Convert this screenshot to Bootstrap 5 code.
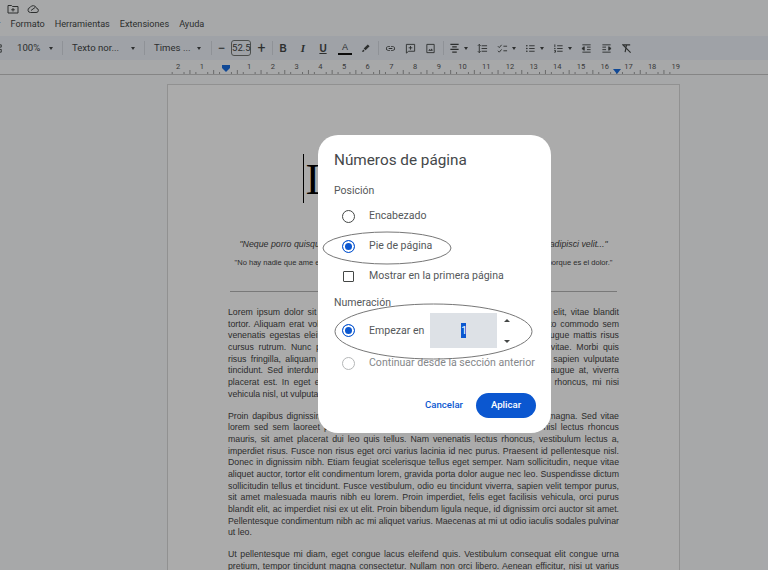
<!DOCTYPE html>
<html lang="es">
<head>
  <meta charset="UTF-8" />
  <meta name="viewport" content="width=device-width, initial-scale=1.0"/>
  <title>Números de página</title>
  <link href="https://cdn.jsdelivr.net/npm/bootstrap@5.3.0/dist/css/bootstrap.min.css" rel="stylesheet" />
  <style>
    html, body { height: 100%; overflow: hidden; }
    body { background: #f9fbfd; color: #444746; font-family: Roboto, "Liberation Sans", sans-serif; }

    .app-shell { height: 570px; overflow: hidden; }
    .top-icons { height: 17px; padding-left: 7px; gap: 8px; }
    .top-icons svg { width: 12px; height: 12px; }
    .menu-row { height: 15px; margin: 0 0 4px -31px; gap: 10px; font-size: 9.15px; color: #444746; }
    .tool-row { height: 24px; background: #edf2fa; margin-left: -12px; font-size: 9.6px; color: #444746; width: 800px; }
    .tool-cell { flex: none; display: flex; align-items: center; justify-content: center; height: 24px; }
    .tool-cell svg { width: 11px; height: 11px; }
    .w-paint { width: 20px; }
    .w-zoom { width: 54px; padding: 0 9px; justify-content: space-between; }
    .w-style { width: 81px; padding: 0 9px; justify-content: space-between; }
    .w-font { width: 66px; padding: 0 10px 0 9px; justify-content: space-between; }
    .w-step { width: 19px; font-size: 14px; }
    .w-plus { width: 21px; font-size: 14px; }
    .w-btn { width: 20px; }
    .w-21 { width: 21px; }
    .w-drop { width: 28px; gap: 4px; }
    .gap-l2 { margin-left: 2px; }
    .gap-l1 { margin-left: 1px; }
    .size-box { flex: none; width: 20px; height: 16px; border: 1px solid #747775; border-radius: 3px; text-align: center; line-height: 14px; font-size: 9.6px; }
    .tool-sep { flex: none; width: 1px; height: 14px; background: #d5dae2; }
    .tb-caret { width: 0; height: 0; border: 2.5px solid transparent; border-top: 3px solid #444746; border-bottom: 0; }
    .glyph-b { font: 700 10px "Liberation Sans", sans-serif; }
    .glyph-i { font: italic 700 11px "Liberation Serif", serif; }
    .glyph-u { font: 700 10px "Liberation Sans", sans-serif; text-decoration: underline; }
    .glyph-a { font: 400 9px "Liberation Sans", sans-serif; border-bottom: 2px solid #111; line-height: 11px; width: 14px; text-align: center; }

    .ruler-row { height: 15px; border-bottom: 1px solid #c7c7c7; }
    .ruler-row svg { display: block; }

    .doc-area { padding: 9px 0 0 167px; }
    .doc-page { width: 513px; height: 600px; background: #fff; border: 1px solid #d8d8d8; padding: 69px 60px 0 60px; color: #444; font-family: "Liberation Sans", sans-serif; }
    .doc-title { font: 400 44px/52px "Liberation Serif", serif; color: #000; text-align: center; white-space: nowrap; }
    .doc-title i { display: inline-block; width: 1px; height: 49px; background: #000; vertical-align: -9px; margin-right: 2px; }
    .doc-quote { font-style: italic; font-size: 8.8px; text-align: center; margin: 32px 0 0; line-height: 12px; white-space: nowrap; }
    .doc-quote2 { font-size: 7.55px; text-align: center; margin: 7px 0 0; line-height: 11px; white-space: nowrap; }
    .doc-rule { height: 1px; border: 0; background: #b5b5b5; margin: 23px 2px 15px; opacity: 1; }
    .doc-par { font-size: 8.75px; line-height: 11.65px; margin: 0 0 10.4px; }
    .doc-par span { display: block; text-align: justify; text-align-last: justify; white-space: nowrap; }
    .doc-par span.last { text-align-last: left; }

    .page-scrim { position: absolute; inset: 0; background: rgba(0, 0, 0, .33); }
    .page-dialog { position: absolute; left: 318px; top: 135px; width: 233px; height: 298px; background: #fff; border-radius: 20px; padding: 15px 16px 0; color: #55585a; }
    .page-dialog h1 { font-size: 15.3px; line-height: 20px; font-weight: 400; margin: 0 0 14px; color: #45484a; }
    .dlg-head { font-size: 10.5px; line-height: 14px; font-weight: 400; margin: 0 0 3px; color: #55585a; }
    .dlg-gap { margin-top: 5px; }
    .dlg-row { display: flex; align-items: center; height: 30px; margin: 0; font-size: 10.55px; }
    .num-row { height: 35px; }
    .dlg-mark { flex: none; width: 28px; margin: 0 7px 0 0; display: flex; justify-content: center; }
    .dlg-radio { appearance: none; width: 13px; height: 13px; border: 1.5px solid #444746; border-radius: 50%; margin: 0; background: #fff; }
    .dlg-radio:checked { border-color: #0b57d0; background: #0b57d0; box-shadow: inset 0 0 0 2px #fff; }
    .dlg-radio:disabled { border-color: #b5b7b8; }
    .dlg-check { appearance: none; width: 11px; height: 11px; border: 1.5px solid #444746; border-radius: 1px; margin: 0; background: #fff; }
    .dlg-off { color: #85878a; }
    .num-box { width: 67px; height: 35px; background: #dde1e6; margin-left: 6px; display: flex; align-items: center; justify-content: center; }
    .num-box span { background: #0b57d0; color: #fff; width: 5px; height: 15px; font-size: 10.4px; line-height: 15px; text-align: center; overflow: hidden; }
    .num-spin { width: 20px; height: 24px; display: flex; flex-direction: column; justify-content: space-between; align-items: center; }
    .spin-up { width: 0; height: 0; border: 3px solid transparent; border-bottom: 3px solid #444746; border-top: 0; }
    .spin-down { width: 0; height: 0; border: 3px solid transparent; border-top: 3px solid #444746; border-bottom: 0; }
    .dlg-foot { position: absolute; right: 15px; bottom: 15px; gap: 13px; }
    .btn-cancel { font-size: 9.6px; font-weight: 500; color: #0b57d0; padding: 0; border: 0; }
    .btn-apply { width: 60px; height: 25px; padding: 0; font-size: 9.6px; font-weight: 500; background: #0b57d0; color: #fff; border: 0; border-radius: 13px; }
    .note-ink { position: absolute; left: 0; top: 0; pointer-events: none; }
  </style>
</head>
<body>
  <svg width="0" height="0" class="d-block">
    <symbol id="i-list" viewBox="0 0 24 24"><path d="M9 6h12M9 12h12M9 18h12" stroke="#444746" stroke-width="2" fill="none"/><circle cx="4" cy="6" r="1.8" fill="#444746"/><circle cx="4" cy="12" r="1.8" fill="#444746"/><circle cx="4" cy="18" r="1.8" fill="#444746"/></symbol>
    <symbol id="i-numlist" viewBox="0 0 24 24"><path d="M9 6h12M9 12h12M9 18h12M4 3v6M2.5 12h3M2.5 16h3v4h-3" stroke="#444746" stroke-width="2" fill="none"/></symbol>
  </svg>

  <div class="app-shell">
    <div class="top-icons d-flex align-items-center">
      <svg viewBox="0 0 24 24"><path d="M2 5h7l2 2h11v13H2z M12 10v7M8.5 13.500h7" fill="none" stroke="#444746" stroke-width="2"/></svg>
      <svg viewBox="0 0 24 24"><path d="M7 19a5 5 0 0 1-1-9.900 7 7 0 0 1 13 1.500A4.200 4.200 0 0 1 18 19z M8 15l8-6" fill="none" stroke="#444746" stroke-width="2"/></svg>
    </div>
    <div class="menu-row d-flex align-items-center">
      <span>Insertar</span><span>Formato</span><span>Herramientas</span><span>Extensiones</span><span>Ayuda</span>
    </div>

    <div class="tool-row d-flex align-items-center">
      <div class="tool-cell w-paint"><svg viewBox="0 0 24 24"><path d="M6 4h12v5H6zM6 14h12v6H6zM9 9v5" fill="none" stroke="#444746" stroke-width="2"/></svg></div>
      <div class="tool-cell w-zoom"><span>100%</span><i class="tb-caret"></i></div>
      <div class="tool-sep"></div>
      <div class="tool-cell w-style"><span>Texto nor...</span><i class="tb-caret"></i></div>
      <div class="tool-sep"></div>
      <div class="tool-cell w-font"><span>Times ...</span><i class="tb-caret"></i></div>
      <div class="tool-sep"></div>
      <div class="tool-cell w-step">−</div>
      <div class="size-box">52.5</div>
      <div class="tool-cell w-plus">+</div>
      <div class="tool-sep"></div>
      <div class="tool-cell w-btn"><span class="glyph-b">B</span></div>
      <div class="tool-cell w-btn"><span class="glyph-i">I</span></div>
      <div class="tool-cell w-btn"><span class="glyph-u">U</span></div>
      <div class="tool-cell w-btn gap-l2"><span class="glyph-a">A</span></div>
      <div class="tool-cell w-21"><svg viewBox="0 0 24 24"><path d="M17 3l4 4-9 9-4-4zM7 14l3 3-2 2H4z" fill="#444746"/></svg></div>
      <div class="tool-sep gap-l2"></div>
      <div class="tool-cell w-btn gap-l1"><svg viewBox="0 0 24 24"><path d="M3.900 12c0-1.710 1.390-3.100 3.100-3.100h4V7H7c-2.760 0-5 2.240-5 5s2.240 5 5 5h4v-1.900H7c-1.710 0-3.100-1.390-3.100-3.100zM8 13h8v-2H8v2zm9-6h-4v1.900h4c1.710 0 3.100 1.390 3.100 3.100s-1.390 3.100-3.100 3.100h-4V17h4c2.760 0 5-2.240 5-5s-2.240-5-5-5z" fill="#444746"/></svg></div>
      <div class="tool-cell w-btn"><svg viewBox="0 0 24 24"><path d="M3 3h18v15H8l-5 4zM12 6.500v8M8 10.500h8" fill="none" stroke="#444746" stroke-width="2"/></svg></div>
      <div class="tool-cell w-21"><svg viewBox="0 0 24 24"><path d="M4 3h16v18H4z" fill="none" stroke="#444746" stroke-width="2"/><path d="M7 17l3-4 2 2 3-3 2 5z" fill="#444746"/></svg></div>
      <div class="tool-sep gap-l2"></div>
      <div class="tool-cell w-drop"><svg viewBox="0 0 24 24"><path d="M3 3h18M7 8.500h10M3 14h18M7 20h10" stroke="#444746" stroke-width="2.500" fill="none"/></svg><i class="tb-caret"></i></div>
      <div class="tool-cell w-btn"><svg viewBox="0 0 24 24"><path d="M10 6h12M10 12h12M10 18h12M5 3v18M2 6l3-3 3 3M2 18l3 3 3-3" stroke="#444746" stroke-width="2" fill="none"/></svg></div>
      <div class="tool-cell w-drop"><svg viewBox="0 0 24 24"><path d="M2 7l3 3 5-6M2 17l3 3 5-6M14 7h8M14 17h8" stroke="#444746" stroke-width="2" fill="none"/></svg><i class="tb-caret"></i></div>
      <div class="tool-cell w-drop"><svg viewBox="0 0 24 24"><use href="#i-list"/></svg><i class="tb-caret"></i></div>
      <div class="tool-cell w-drop"><svg viewBox="0 0 24 24"><use href="#i-numlist"/></svg><i class="tb-caret"></i></div>
      <div class="tool-cell w-btn"><svg viewBox="0 0 24 24"><path d="M3 4h18M13 9h8M13 14.500h8M3 20h18M2 12l5-4v8z" stroke="#444746" stroke-width="2" fill="#444746"/></svg></div>
      <div class="tool-cell w-btn"><svg viewBox="0 0 24 24"><path d="M3 4h18M3 9h8M3 14.500h8M3 20h18M22 12l-5-4v8z" stroke="#444746" stroke-width="2" fill="#444746"/></svg></div>
      <div class="tool-cell w-btn"><svg viewBox="0 0 24 24"><path d="M4 4h16M12 4l-3 16M3 3l18 18" stroke="#444746" stroke-width="2.500" fill="none"/></svg></div>
    </div>

    <div class="ruler-row">
      <svg id="ruler" width="768" height="15"></svg>
    </div>

    <div class="doc-area">
      <div class="doc-page">
        <div class="doc-title"><i></i>Lorem Ipsum</div>
        <p class="doc-quote">"Neque porro quisquam est qui dolorem ipsum quia dolor sit amet, consectetur, adipisci velit..."</p>
        <p class="doc-quote2">"No hay nadie que ame el dolor mismo, que lo busque, lo encuentre y lo quiera, simplemente porque es el dolor."</p>
        <hr class="doc-rule">
        <p class="doc-par">
          <span>Lorem ipsum dolor sit amet, consectetur adipiscing elit. Sed lacinia magna sed elit, vitae blandit</span>
          <span>tortor. Aliquam erat volutpat. Aenean non sapien in urna pharetra feugiat, ut justo commodo sem</span>
          <span>venenatis egestas eleifend. Curabitur sodales ante vitae nisl ornare, at mollis augue mattis risus</span>
          <span>cursus rutrum. Nunc placerat, lectus eu luctus porta, nibh dui tempor est, id vitae. Morbi quis</span>
          <span>risus fringilla, aliquam sem non, ornare felis. Integer eu mi quis lorem tempus sapien vulputate</span>
          <span>tincidunt. Sed interdum nisi vel nunc posuere, sed gravida erat molestie, quis augue at, viverra</span>
          <span>placerat est. In eget ex lacinia, tempor est at, bibendum elit. Sed vel tincidunt rhoncus, mi nisi</span>
          <span class="last">vehicula nisl, ut vulputate nisi.</span>
        </p>
        <p class="doc-par">
          <span>Proin dapibus dignissim lectus, non cursus arcu dictum vel. Integer vitae lacus magna. Sed vitae</span>
          <span>lorem sed sem laoreet pulvinar. Donec quis ante at ligula finibus ornare, eu nisl lectus rhoncus</span>
          <span>mauris, sit amet placerat dui leo quis tellus. Nam venenatis lectus rhoncus, vestibulum lectus a,</span>
          <span>imperdiet risus. Fusce non risus eget orci varius lacinia id nec purus. Praesent id pellentesque nisl.</span>
          <span>Donec in dignissim nibh. Etiam feugiat scelerisque tellus eget semper. Nam sollicitudin, neque vitae</span>
          <span>aliquet auctor, tortor elit condimentum lorem, gravida porta dolor augue nec leo. Suspendisse dictum</span>
          <span>sollicitudin tellus et tincidunt. Fusce vestibulum, odio eu tincidunt viverra, sapien velit tempor purus,</span>
          <span>sit amet malesuada mauris nibh eu lorem. Proin imperdiet, felis eget facilisis vehicula, orci purus</span>
          <span>blandit elit, ac imperdiet nisi ex ut elit. Proin bibendum ligula neque, id dignissim orci auctor sit amet.</span>
          <span>Pellentesque condimentum nibh ac mi aliquet varius. Maecenas at mi ut odio iaculis sodales pulvinar</span>
          <span class="last">ut leo.</span>
        </p>
        <p class="doc-par">
          <span>Ut pellentesque mi diam, eget congue lacus eleifend quis. Vestibulum consequat elit congue urna</span>
          <span>pretium, tempor tincidunt magna consectetur. Nullam non orci libero. Aenean efficitur, nisi ut varius</span>
        </p>
      </div>
    </div>
  </div>

  <div class="page-scrim"></div>

  <div class="page-dialog" role="dialog">
    <h1>Números de página</h1>
    <p class="dlg-head">Posición</p>
    <label class="dlg-row"><span class="dlg-mark"><input class="dlg-radio" type="radio" name="pos"></span>Encabezado</label>
    <label class="dlg-row"><span class="dlg-mark"><input class="dlg-radio" type="radio" name="pos" checked></span>Pie de página</label>
    <label class="dlg-row"><span class="dlg-mark"><input class="dlg-check" type="checkbox"></span>Mostrar en la primera página</label>
    <p class="dlg-head dlg-gap">Numeración</p>
    <div class="dlg-row num-row">
      <span class="dlg-mark"><input class="dlg-radio" type="radio" name="num" checked></span>Empezar en
      <div class="num-box"><span>1</span></div>
      <div class="num-spin"><i class="spin-up"></i><i class="spin-down"></i></div>
    </div>
    <label class="dlg-row dlg-off"><span class="dlg-mark"><input class="dlg-radio" type="radio" name="num" disabled></span>Continuar desde la sección anterior</label>
    <div class="dlg-foot d-flex align-items-center">
      <button class="btn btn-cancel" type="button">Cancelar</button>
      <button class="btn btn-apply" type="button">Aplicar</button>
    </div>
  </div>

  <svg class="note-ink" width="768" height="570">
    <ellipse cx="387" cy="248" rx="64" ry="16" fill="none" stroke="#777" stroke-width="1"/>
    <ellipse cx="433.500" cy="331.500" rx="98.500" ry="27.500" fill="none" stroke="#777" stroke-width="1"/>
  </svg>

  <script src="https://cdn.jsdelivr.net/npm/bootstrap@5.3.0/dist/js/bootstrap.bundle.min.js"></script>
  <script>
    // ruler ticks and numbers
    const cm = 23.7, zero = 225.5;
    let ruler = '';
    for (let q = -9; q <= 76; q++) {
      const x = zero + q * cm / 4;
      if (x < 165 || x > 679) continue;
      const h = q % 4 === 0 ? 0 : (q % 2 === 0 ? 4 : 2);
      if (h) ruler += `<line x1="${x}" x2="${x}" y1="${14 - h}" y2="14" stroke="#777" stroke-width=".7"/>`;
    }
    for (let n = -2; n <= 19; n++) {
      if (n === 0) continue;
      const x = zero + n * cm;
      ruler += `<text x="${x}" y="9" font-size="7.500" font-family="Roboto, sans-serif" text-anchor="middle" fill="#555">${Math.abs(n)}</text>`;
    }
    ruler += '<path d="M222 5h8v3l-4 4-4-4z" fill="#1a6ee0"/><path d="M613 9h8l-4 5z" fill="#1a6ee0"/>';
    document.getElementById('ruler').innerHTML = ruler;
  </script>
</body>
</html>
